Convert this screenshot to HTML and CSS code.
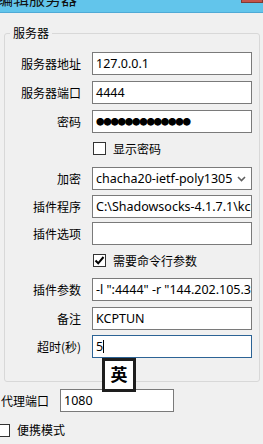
FILE: index.html
```html
<!DOCTYPE html>
<html lang="zh-CN">
<head>
<meta charset="utf-8">
<title>编辑服务器</title>
<link rel="stylesheet" href="styles.css">
</head>
<body>
<div class="window">
  <div class="titlebar">
    <span class="title">编辑服务器</span>
    <span class="close"></span>
  </div>

  <fieldset class="group">
    <legend class="legend">服务器</legend>

    <div class="row r1"><span class="lbl">服务器地址</span><div class="field">127.0.0.1</div></div>
    <div class="row r2"><span class="lbl">服务器端口</span><div class="field">4444</div></div>
    <div class="row r3"><span class="lbl">密码</span><div class="field dots">●●●●●●●●●●●●●</div></div>
    <div class="row crow r4"><span class="lbl"></span><span class="check"><span class="box"></span><span class="ctext">显示密码</span></span></div>
    <div class="row r5"><span class="lbl">加密</span><div class="field select"><span class="sel-text">chacha20-ietf-poly1305</span><svg class="chev" width="9" height="6" viewBox="0 0 9 6"><path d="M1 1 L4.5 4.5 L8 1" fill="none" stroke="#606060" stroke-width="1.6"/></svg></div></div>
    <div class="row r6"><span class="lbl">插件程序</span><div class="field">C:\Shadowsocks-4.1.7.1\kcptun-client.exe</div></div>
    <div class="row r7"><span class="lbl">插件选项</span><div class="field"></div></div>
    <div class="row crow r8"><span class="lbl"></span><span class="check"><span class="box checked"><svg width="11" height="11" viewBox="0 0 11 11"><path d="M1.5 5.5 L4.2 8.3 L9.5 2" fill="none" stroke="#000" stroke-width="2"/></svg></span><span class="ctext">需要命令行参数</span></span></div>
    <div class="row r9"><span class="lbl">插件参数</span><div class="field">-l ":4444" -r "144.202.105.38:4000"</div></div>
    <div class="row r10"><span class="lbl">备注</span><div class="field">KCPTUN</div></div>
    <div class="row r11"><span class="lbl">超时(秒)</span><div class="field focused"><span class="caret">5</span></div></div>
  </fieldset>

  <div class="ime">英</div>

  <div class="row proxy"><span class="plbl">代理端口</span><div class="field pfield">1080</div></div>
  <div class="portable"><span class="box"></span><span class="ctext">便携模式</span></div>
</div>
</body>
</html>
```

FILE: styles.css
```css
html, body {
  margin: 0;
  padding: 0;
  background: #f0f0f0;
}
body {
  width: 263px;
  height: 444px;
  overflow: hidden;
  font-family: "Noto Sans CJK SC", "Noto Sans", sans-serif;
  font-size: 12px;
  color: #000;
}
.window {
  position: relative;
  width: 263px;
  height: 444px;
  overflow: hidden;
}
.titlebar {
  display: flex;
  height: 12px;
  background: #62c5eb;
  border-bottom: 1px solid #4faad6;
  overflow: hidden;
}
.title {
  font-size: 16px;
  line-height: 16px;
  margin-top: -10px;
  margin-left: -3px;
  color: #111;
}
.close {
  margin-left: auto;
  width: 20px;
  height: 2px;
  background: #c4524a;
  border: 1px solid #7e3a34;
  border-top: none;
}
.group {
  box-sizing: border-box;
  width: 256px;
  margin: 12px 0 0 4px;
  padding: 0 0 23px 0;
  border: 1px solid #d8d8d8;
  border-radius: 3px;
  min-width: 0;
}
.legend {
  margin-left: 5px;
  padding: 0 3px;
  line-height: 16px;
  font-size: 12px;
}
.row {
  display: flex;
  align-items: center;
  height: 23px;
}
.lbl {
  width: 76px;
  text-align: right;
  margin-right: 11px;
  flex: none;
  line-height: 16px;
}
.field {
  box-sizing: border-box;
  width: 160px;
  height: 23px;
  background: #fff;
  border: 1px solid #7a7a7a;
  padding: 0 3px;
  font-family: "Noto Sans", "Noto Sans CJK SC", sans-serif;
  font-size: 12.5px;
  line-height: 21px;
  white-space: nowrap;
  overflow: hidden;
  display: flex;
  align-items: center;
}
.dots {
  font-family: "Noto Sans CJK SC", sans-serif;
  font-size: 8.5px;
  letter-spacing: -1.3px;
  padding-left: 3px;
}
.select {
  justify-content: space-between;
  padding-right: 5px;
}
.chev { flex: none; }
.focused {
  border-color: #2c6395;
}
.caret {
  border-right: 1px solid #000;
  line-height: 13px;
}
.r1 { margin-top: 11px; }
.r2 { margin-top: 6px; }
.r3 { margin-top: 6px; }
.crow { height: 13px; }
.r4 { margin-top: 9px; }
.r5 { margin-top: 12px; }
.r6 { margin-top: 5px; }
.r7 { margin-top: 4px; }
.r8 { margin-top: 9px; }
.r9 { margin-top: 11px; }
.r10 { margin-top: 6px; }
.r11 { margin-top: 5px; }
.check {
  display: flex;
  align-items: center;
  margin-left: 1px;
}
.box {
  box-sizing: border-box;
  width: 13px;
  height: 13px;
  background: #fff;
  border: 1px solid #333;
  flex: none;
  display: flex;
  align-items: center;
  justify-content: center;
}
.ctext {
  margin-left: 7px;
  line-height: 16px;
}
.ime {
  position: absolute;
  left: 102px;
  top: 358px;
  box-sizing: border-box;
  width: 34px;
  height: 34px;
  border: 3px solid #1e1e1e;
  background: #fff;
  font-weight: bold;
  font-size: 17px;
  line-height: 26px;
  text-align: center;
}
.proxy {
  margin-top: 7px;
}
.plbl {
  margin-left: 1px;
  margin-right: 11px;
  line-height: 16px;
}
.pfield {
  width: 114px;
}
.portable {
  display: flex;
  align-items: center;
  margin-top: 10px;
  margin-left: -3px;
}
.portable .ctext {
  margin-left: 7px;
}
```
